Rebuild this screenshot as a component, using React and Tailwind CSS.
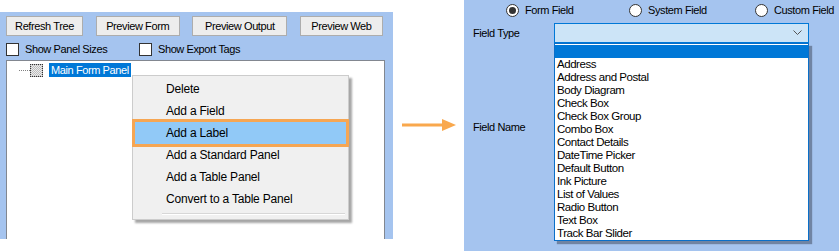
import React from 'react';

const font = { fontFamily: '"Liberation Sans", Arial, sans-serif' };

const fieldTypes = [
  'Address',
  'Address and Postal',
  'Body Diagram',
  'Check Box',
  'Check Box Group',
  'Combo Box',
  'Contact Details',
  'DateTime Picker',
  'Default Button',
  'Ink Picture',
  'List of Values',
  'Radio Button',
  'Text Box',
  'Track Bar Slider',
];

const menuItems = [
  'Delete',
  'Add a Field',
  'Add a Label',
  'Add a Standard Panel',
  'Add a Table Panel',
  'Convert to a Table Panel',
];

function WinButton({ label, width }) {
  return (
    <div
      className="h-[20px] flex items-center justify-center bg-[#ededed] border border-[#adadad] text-[11px] tracking-[-0.4px] text-black"
      style={{ width }}
    >
      {label}
    </div>
  );
}

function CheckBox({ label, width }) {
  return (
    <div className="flex items-center h-[13px]" style={{ width }}>
      <div className="w-[13px] h-[13px] bg-white border border-[#333]" />
      <span className="ml-[6px] text-[11px] leading-[13px] tracking-[-0.4px] text-black">{label}</span>
    </div>
  );
}

function Radio({ label, checked, width }) {
  return (
    <div className="flex items-center h-[13px]" style={{ width }}>
      <div className="w-[13px] h-[13px] rounded-full bg-white border border-[#333] flex items-center justify-center">
        {checked && <div className="w-[7px] h-[7px] rounded-full bg-[#333]" />}
      </div>
      <span className="ml-[6px] text-[11px] leading-[13px] tracking-[-0.4px] text-black">{label}</span>
    </div>
  );
}

function ContextMenu() {
  return (
    <div className="absolute left-[132px] top-[63px] w-[217px] h-[145px] bg-[#f0f0f0] border border-[#cccccc] shadow-[3px_3px_2px_rgba(0,0,0,0.35)] pt-[2px] text-[12px] tracking-[-0.2px] text-black">
      {menuItems.map((item) =>
        item === 'Add a Label' ? (
          <div
            key={item}
            className="h-[22px] mx-[2px] flex items-center pl-[31px] bg-[#91c9f7] outline-[3px] outline-solid outline-[#f6a653]"
          >
            {item}
          </div>
        ) : (
          <div key={item} className="h-[22px] flex items-center pl-[33px]">
            {item}
          </div>
        )
      )}
      <div className="mt-[3px] ml-[29px] mr-[3px] h-[1px] bg-[#d7d7d7]" />
      <div className="ml-[29px] mr-[3px] h-[1px] bg-white" />
    </div>
  );
}

function LeftPanel() {
  return (
    <div className="mt-[12px] w-[393px] h-[227px] bg-[#a5c4ef] relative pl-[6px] pt-[4px] flex flex-col">
      <div className="flex justify-between w-[377px]">
        <WinButton label="Refresh Tree" width={77} />
        <WinButton label="Preview Form" width={84} />
        <WinButton label="Preview Output" width={95} />
        <WinButton label="Preview Web" width={83} />
      </div>
      <div className="flex mt-[7px]">
        <CheckBox label="Show Panel Sizes" width={133} />
        <CheckBox label="Show Export Tags" />
      </div>
      <div className="mt-[4px] w-[379px] flex-1 bg-white border-l border-t border-r border-[#828790] relative">
        <div className="flex items-center h-[14px] mt-[2px]">
          <div className="ml-[12px] w-[11px] border-t border-dotted border-[#808080]" />
          <div
            className="w-[13px] h-[13px] border border-dotted border-[#333]"
            style={{
              backgroundColor: '#d8d8d8',
              backgroundImage:
                'repeating-conic-gradient(#bdbdbd 0% 25%, #ececec 0% 50%)',
              backgroundSize: '2px 2px',
            }}
          />
          <div className="ml-[6px] h-[14px] px-[2px] bg-[#0078d7] text-white text-[11px] tracking-[-0.4px] flex items-center">
            Main Form Panel
          </div>
        </div>
      </div>
      <ContextMenu />
    </div>
  );
}

function Arrow() {
  return (
    <div className="w-[71px] flex items-center justify-center">
      <svg width="60" height="14" viewBox="0 0 60 14" className="mt-[-1px]">
        <rect x="3" y="5.5" width="42" height="3" fill="#f9a84d" />
        <polygon points="43,1 57,7 43,13" fill="#f9a84d" />
      </svg>
    </div>
  );
}

function RightPanel() {
  return (
    <div className="w-[375px] h-[251px] bg-[#a5c4ef] relative">
      <div className="flex pl-[42px] pt-[4px]">
        <Radio label="Form Field" checked width={123} />
        <Radio label="System Field" width={126} />
        <Radio label="Custom Field" />
      </div>
      <div className="flex items-center mt-[6px]">
        <span className="ml-[9px] w-[81px] text-[11px] tracking-[-0.4px] text-black">Field Type</span>
        <div className="w-[255px] h-[20px] bg-[#cce4f7] border border-[#0078d7] flex items-center justify-end pr-[6px]">
          <svg width="9" height="6" viewBox="0 0 9 6">
            <polyline points="0.5,0.5 4.5,4.5 8.5,0.5" fill="none" stroke="#555" strokeWidth="1" />
          </svg>
        </div>
      </div>
      <div className="ml-[9px] mt-[77px] text-[11px] leading-[14px] tracking-[-0.4px] text-black">Field Name</div>
      <div className="absolute left-[90px] top-[43px] w-[255px] h-[198px] bg-white border border-[#0a6fc9] shadow-[3px_3px_1px_rgba(70,80,100,0.55)] pt-[1px]">
        <div className="h-[13px] bg-[#0078d7]" />
        {fieldTypes.map((t) => (
          <div key={t} className="h-[13px] leading-[13px] pl-[2px] text-[11.5px] tracking-[-0.45px] text-black">
            {t}
          </div>
        ))}
      </div>
    </div>
  );
}

export default function App() {
  return (
    <div className="w-[839px] h-[251px] bg-white flex" style={font}>
      <LeftPanel />
      <Arrow />
      <RightPanel />
    </div>
  );
}
